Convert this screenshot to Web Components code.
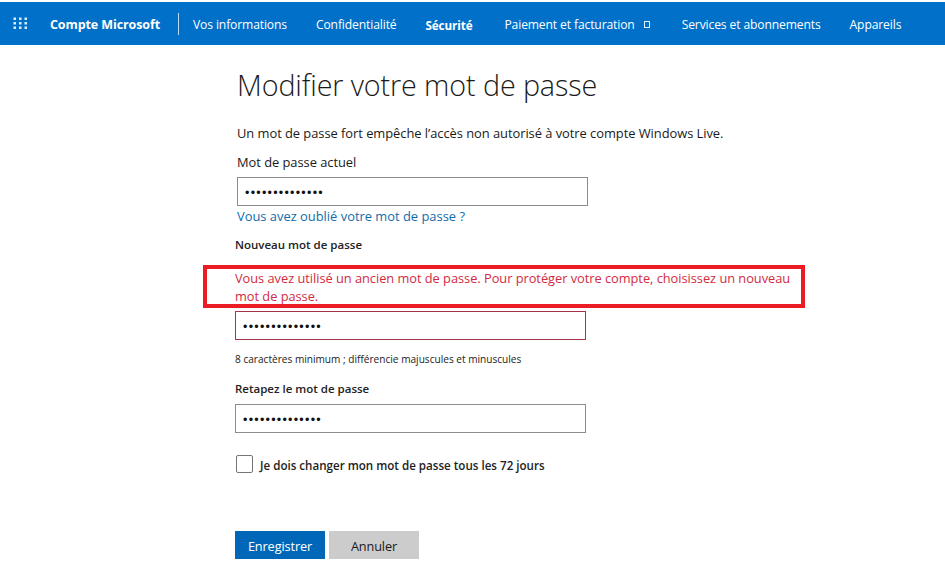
<!DOCTYPE html>
<html lang="fr">
<head>
<meta charset="utf-8">
<title>Modifier votre mot de passe</title>
<style>
    html, body { margin: 0; padding: 0; background: #fff; overflow: hidden; }
    body { font-family: "Open Sans", "Noto Sans", sans-serif; color: #1a1a1a; }
</style>
</head>
<body>
<ms-page>
    <ms-header slot="header">
        <ms-nav-item>Vos informations</ms-nav-item>
        <ms-nav-item>Confidentialité</ms-nav-item>
        <ms-nav-item active>Sécurité</ms-nav-item>
        <ms-nav-item external>Paiement et facturation</ms-nav-item>
        <ms-nav-item>Services et abonnements</ms-nav-item>
        <ms-nav-item>Appareils</ms-nav-item>
    </ms-header>
    <ms-password-form></ms-password-form>
</ms-page>

<script>
const sharedFont = '"Open Sans", "Noto Sans", sans-serif';

class MsPage extends HTMLElement {
    constructor() {
        super();
        this.attachShadow({ mode: 'open' }).innerHTML = `
            <style>
                :host { display: block; width: 945px; height: 582px; padding-top: 2px; box-sizing: border-box; }
            </style>
            <slot name="header"></slot>
            <slot></slot>
        `;
    }
}

class MsHeader extends HTMLElement {
    constructor() {
        super();
        this.attachShadow({ mode: 'open' }).innerHTML = `
            <style>
                :host { display: flex; align-items: center; height: 43px; background: #0070c9; color: #fff; font-family: ${sharedFont}; }
                .waffle { margin-left: 13px; width: 15px; height: 15px; display: block; }
                .brand { margin-left: 22px; padding-top: 2px; font-size: 12.5px; font-weight: 700; white-space: nowrap; letter-spacing: -0.1px; width: 112px; }
                .sep { margin-left: 16px; width: 1px; height: 22px; background: rgba(255,255,255,.75); }
                nav { display: flex; margin-left: 14px; padding-top: 2px; }
            </style>
            <svg class="waffle" viewBox="0 0 15 15" fill="#dcebf8">
                <rect x="0.5" y="1.5" width="2.5" height="2.5"/><rect x="6" y="1.5" width="2.5" height="2.5"/><rect x="11.5" y="1.5" width="2.5" height="2.5"/>
                <rect x="0.5" y="6" width="2.5" height="2.5"/><rect x="6" y="6" width="2.5" height="2.5"/><rect x="11.5" y="6" width="2.5" height="2.5"/>
                <rect x="0.5" y="10.5" width="2.5" height="2.5"/><rect x="6" y="10.5" width="2.5" height="2.5"/><rect x="11.5" y="10.5" width="2.5" height="2.5"/>
            </svg>
            <span class="brand">Compte Microsoft</span>
            <span class="sep"></span>
            <nav><slot></slot></nav>
        `;
    }
}

class MsNavItem extends HTMLElement {
    constructor() {
        super();
        const ext = this.hasAttribute('external');
        this.attachShadow({ mode: 'open' }).innerHTML = `
            <style>
                :host { display: flex; align-items: center; font-size: 12.1px; white-space: nowrap; letter-spacing: -0.12px; margin-right: 29px; }
                :host([active]) { font-size: 11.7px; font-weight: 700; margin-right: 32px; }
                :host([external]) { margin-right: 32px; }
                .box { box-sizing: border-box; width: 6px; height: 7px; border: 1px solid #e4f0fa; margin-left: 9px; margin-bottom: 1px; }
            </style>
            <slot></slot>${ext ? '<span class="box"></span>' : ''}
        `;
    }
}

const fieldTemplate = document.createElement('template');
fieldTemplate.innerHTML = `
    <style>
        :host { display: block; box-sizing: border-box; width: 351px; height: 29px; border: 1px solid #8c8c8c; background: #fff; overflow: hidden; }
        :host([invalid]) { border-color: #a8324a; }
        .dots { display: block; padding-left: 7px; font: 400 12.5px/30px "Liberation Sans", sans-serif; letter-spacing: 1.26px; color: #111; white-space: nowrap; }
    </style>
    <span class="dots"></span>
`;

class MsPasswordInput extends HTMLElement {
    constructor() {
        super();
        this.attachShadow({ mode: 'open' }).appendChild(fieldTemplate.content.cloneNode(true));
        this.shadowRoot.querySelector('.dots').textContent = '•'.repeat(14);
    }
}

class MsButton extends HTMLElement {
    constructor() {
        super();
        this.attachShadow({ mode: 'open' }).innerHTML = `
            <style>
                :host { display: flex; align-items: center; justify-content: center; box-sizing: border-box; width: 90px; height: 28px; padding-top: 2px; font-size: 12.7px; background: #ccc; color: #1a1a1a; letter-spacing: -0.1px; }
                :host([primary]) { background: #0067b8; color: #fff; }
            </style>
            <slot></slot>
        `;
    }
}

class MsCheckbox extends HTMLElement {
    constructor() {
        super();
        this.attachShadow({ mode: 'open' }).innerHTML = `
            <style>
                :host { display: flex; align-items: center; gap: 7px; margin-left: 1px; font-size: 11.6px; font-weight: 600; color: #222; }
                .box { box-sizing: border-box; width: 17px; height: 18px; border: 1px solid #767676; border-radius: 2px; background: #fff; }
                .text { line-height: 14px; padding-top: 4px; }
            </style>
            <span class="box"></span>
            <span class="text"><slot></slot></span>
        `;
    }
}

class MsPasswordForm extends HTMLElement {
    constructor() {
        super();
        this.attachShadow({ mode: 'open' }).innerHTML = `
            <style>
                :host { display: block; padding-left: 235px; font-family: ${sharedFont}; color: #1a1a1a; }
                h1 { margin: 20px 0 0 2px; font-size: 28.7px; line-height: 40px; font-weight: 300; color: #1a1a1a; white-space: nowrap; letter-spacing: -0.1px; }
                .indent { margin-left: 2px; }
                .intro { margin-top: 19px; font-size: 12.9px; line-height: 18px; white-space: nowrap; letter-spacing: -0.04px; }
                .lbl { margin-top: 11px; font-size: 12.9px; line-height: 18px; letter-spacing: -0.04px; }
                ms-password-input.current { margin-top: 6px; }
                a { display: block; margin-top: 1px; font-size: 12.9px; line-height: 18px; color: #0f6cab; text-decoration: none; }
                .strong { font-size: 11.5px; font-weight: 600; line-height: 16px; color: #222; white-space: nowrap; }
                .new { margin-top: 12px; }
                .error { position: relative; margin-top: 16px; width: 560px; font-size: 12.8px; line-height: 18px; color: #d32a3f; letter-spacing: -0.02px; }
                .error::after { content: ""; position: absolute; left: -32px; top: -4px; width: 602px; height: 43px; box-sizing: border-box; border: 4px solid #ec1c24; }
                .error + ms-password-input { margin-top: 6px; }
                .hint { margin-top: 12px; font-size: 10.1px; line-height: 14px; color: #222; white-space: nowrap; }
                .retype { margin-top: 15px; }
                .retype + ms-password-input { margin-top: 7px; }
                ms-checkbox { margin-top: 22px; }
                .actions { display: flex; gap: 4px; margin-top: 58px; }
            </style>
            <h1>Modifier votre mot de passe</h1>
            <div class="intro indent">Un mot de passe fort empêche l’accès non autorisé à votre compte Windows Live.</div>
            <div class="lbl indent">Mot de passe actuel</div>
            <ms-password-input class="current indent"></ms-password-input>
            <a class="indent" href="#">Vous avez oublié votre mot de passe ?</a>
            <div class="strong new">Nouveau mot de passe</div>
            <div class="error">Vous avez utilisé un ancien mot de passe. Pour protéger votre compte, choisissez un nouveau mot de passe.</div>
            <ms-password-input invalid></ms-password-input>
            <div class="hint">8 caractères minimum ; différencie majuscules et minuscules</div>
            <div class="strong retype">Retapez le mot de passe</div>
            <ms-password-input></ms-password-input>
            <ms-checkbox>Je dois changer mon mot de passe tous les 72 jours</ms-checkbox>
            <div class="actions">
                <ms-button primary>Enregistrer</ms-button>
                <ms-button>Annuler</ms-button>
            </div>
        `;
    }
}

customElements.define('ms-page', MsPage);
customElements.define('ms-header', MsHeader);
customElements.define('ms-nav-item', MsNavItem);
customElements.define('ms-password-input', MsPasswordInput);
customElements.define('ms-button', MsButton);
customElements.define('ms-checkbox', MsCheckbox);
customElements.define('ms-password-form', MsPasswordForm);
</script>
</body>
</html>
